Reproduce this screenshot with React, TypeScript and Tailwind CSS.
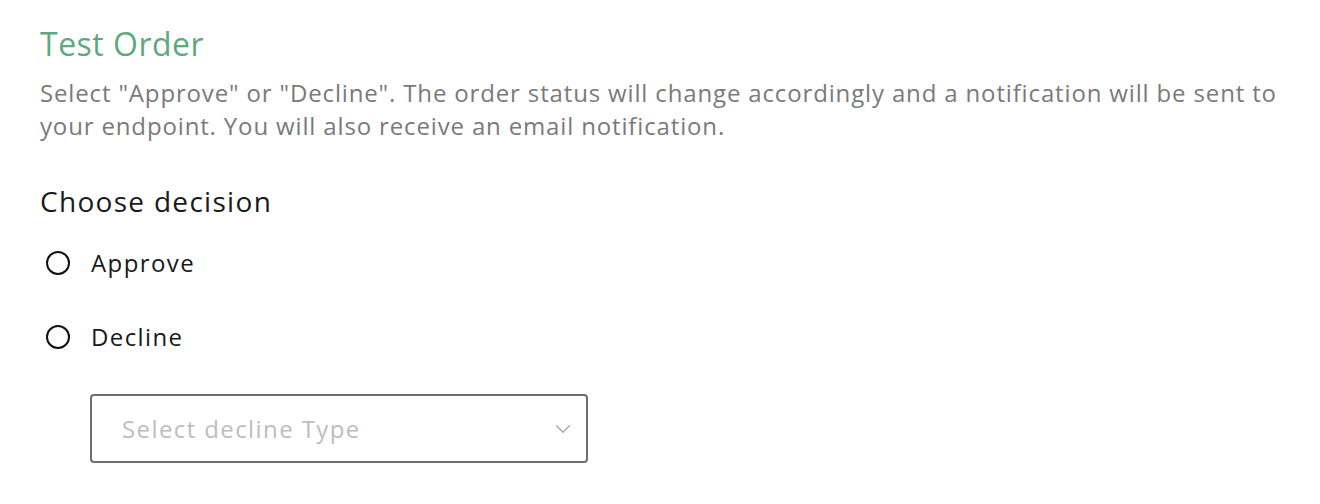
import { ChevronDown } from 'lucide-react';

const options = ['Approve', 'Decline'];

export default function App() {
  return (
    <div className="min-h-screen bg-white px-10 pt-[24px] font-['Open_Sans',sans-serif]">
      <h1 className="text-[32px] leading-[40px] tracking-[0.5px] text-[#5eaa7e]">Test Order</h1>
      <p className="mt-[12px] text-[24px] leading-[33px] tracking-[0.85px] text-[#7a7a7a]">
        Select "Approve" or "Decline". The order status will change accordingly and a notification will be sent to your endpoint. You will also receive an email notification.
      </p>

      <h2 className="mt-[41px] text-[28px] leading-[36px] tracking-[1.3px] text-[#1a1a1a]">Choose decision</h2>

      <div className="mt-[32px] flex flex-col gap-[50px]">
        {options.map((opt) => (
          <label key={opt} className="flex h-[24px] items-center gap-[21px] pl-[6px]">
            <span className="h-[24px] w-[24px] rounded-full border-2 border-[#111]" />
            <span className="text-[24px] leading-[24px] tracking-[1.4px] text-[#1a1a1a]">{opt}</span>
          </label>
        ))}
      </div>

      <div className="ml-[50px] mt-[45px] flex h-[69px] w-[498px] items-center justify-between rounded-[4px] border-2 border-[#6e6e6e] pl-[30px] pr-[10px]">
        <span className="text-[24px] tracking-[1.4px] text-[#bdbdbd]">Select decline Type</span>
        <ChevronDown className="h-[26px] w-[26px] text-[#a8a8a8]" strokeWidth={1.3} />
      </div>
    </div>
  );
}
